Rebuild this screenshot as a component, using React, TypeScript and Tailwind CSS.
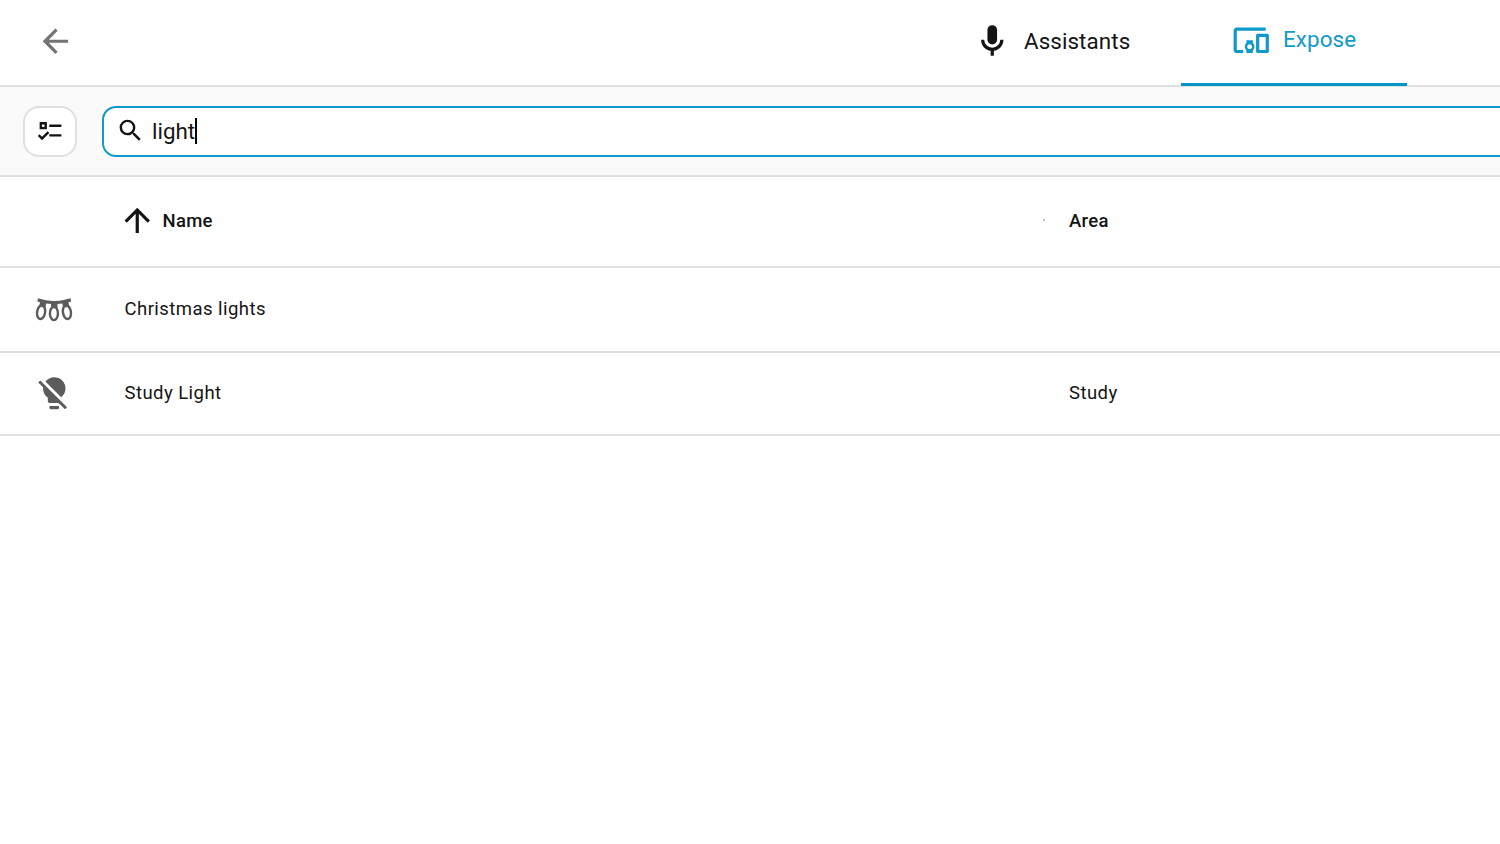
const icons = {
  back: "M20,11V13H8L13.5,18.5L12.08,19.92L4.16,12L12.08,4.08L13.5,5.5L8,11H20Z",
  sort: "M13,20H11V8L5.5,13.5L4.08,12.08L12,4.16L19.92,12.08L18.5,13.5L13,8V20Z",
  microphone:
    "M12,2A3,3 0 0,1 15,5V11A3,3 0 0,1 12,14A3,3 0 0,1 9,11V5A3,3 0 0,1 12,2M19,11C19,14.53 16.39,17.44 13,17.93V21H11V17.93C7.61,17.44 5,14.53 5,11H7A5,5 0 0,0 12,16A5,5 0 0,0 17,11H19Z",
  devices:
    "M3 6H21V4H3C1.9 4 1 4.9 1 6V18C1 19.1 1.9 20 3 20H7V18H3V6M13 12H9V13.78C8.39 14.33 8 15.11 8 16C8 16.89 8.39 17.67 9 18.22V20H13V18.22C13.61 17.67 14 16.88 14 16S13.61 14.33 13 13.78V12M11 17.5C10.17 17.5 9.5 16.83 9.5 16S10.17 14.5 11 14.5 12.5 15.17 12.5 16 11.83 17.5 11 17.5M22 8H16C15.5 8 15 8.5 15 9V19C15 19.5 15.5 20 16 20H22C22.5 20 23 19.5 23 19V9C23 8.5 22.5 8 22 8M21 18H17V10H21V18Z",
  search:
    "M9.5,3A6.5,6.5 0 0,1 16,9.5C16,11.11 15.41,12.59 14.44,13.73L14.71,14H15.5L20.5,19L19,20.5L14,15.5V14.71L13.73,14.44C12.59,15.41 11.11,16 9.5,16A6.5,6.5 0 0,1 3,9.5A6.5,6.5 0 0,1 9.5,3M9.5,5C7,5 5,7 5,9.5C5,12 7,14 9.5,14C12,14 14,12 14,9.5C14,7 12,5 9.5,5Z",
  checks:
    "M3,5H9V11H3V5M5,7V9H7V7H5M11,7H21V9H11V7M11,15H21V17H11V15M5,20L1.5,16.5L2.91,15.09L5,17.17L9.59,12.59L11,14L5,20Z",
  lightOff:
    "M12,2C9.76,2 7.78,3.05 6.5,4.68L16.31,14.5C17.94,13.21 19,11.24 19,9A7,7 0 0,0 12,2M3.28,4L2,5.27L5.04,8.3C5,8.53 5,8.76 5,9C5,11.38 6.19,13.47 8,14.74V17A1,1 0 0,0 9,18H14.73L18.73,22L20,20.72L3.28,4M9,20V21A1,1 0 0,0 10,22H14A1,1 0 0,0 15,21V20H9Z",
};

function Icon({ path, className }: { path: string; className: string }) {
  return (
    <svg viewBox="0 0 24 24" fill="currentColor" className={className}>
      <path d={path} />
    </svg>
  );
}

function StringLights({ className }: { className: string }) {
  return (
    <svg viewBox="0 0 24 24" fill="currentColor" className={className}>
      {/* Cord and sockets */}
      <path d="M1.9,5.2C5,6.2 8.5,6.8 12,6.8S19,6.2 22.1,5.2L22.6,7.1L20.9,7.7L21.3,10.4L17.6,11L17,8.4L14,8.7V11.4H10V8.7L7,8.4L6.4,11L2.7,10.4L3.1,7.7L1.4,7.1Z" />
      {/* Bulbs */}
      <g fill="none" stroke="currentColor" strokeWidth="1.5">
        <ellipse cx="3.8" cy="13.8" rx="2.5" ry="4.3" transform="rotate(9 3.8 13.8)" />
        <ellipse cx="11.8" cy="14.6" rx="2.5" ry="4.2" />
        <ellipse cx="19.9" cy="13.8" rx="2.5" ry="4.3" transform="rotate(-9 19.9 13.8)" />
      </g>
    </svg>
  );
}

export default function App() {
  return (
    <div className="h-[844px] w-full overflow-hidden bg-white font-[Roboto,sans-serif] text-[#141414]">
      {/* Header */}
      <header className="flex h-[87px] border-b-2 border-[#e0e0e0]">
        <button className="ml-[35.5px] mt-[22px] size-[38.5px] text-[#737373]">
          <Icon path={icons.back} className="size-full" />
        </button>
        <nav className="ml-auto mr-[93px] flex h-[86px]">
          <div className="flex items-center pr-[51px] pb-[3px]">
            <Icon path={icons.microphone} className="size-[38.5px]" />
            <span className="ml-[13px] w-[106px] whitespace-nowrap text-[22.4px] tracking-[0.08px]">
              Assistants
            </span>
          </div>
          <div className="flex w-[226px] items-center border-b-3 border-[#0295c7] pl-[51px] pb-[3px] text-[#0f9acb]">
            <Icon path={icons.devices} className="size-[38.5px]" />
            <span className="ml-[12.5px] text-[22.4px] tracking-[0.08px]">Expose</span>
          </div>
        </nav>
      </header>

      {/* Search bar */}
      <div className="flex h-[90px] items-center border-b-2 border-[#e0e0e0] bg-[#fafafa] pl-[22.5px]">
        <button className="flex h-[51px] w-[54.5px] items-center justify-center rounded-2xl border-2 border-[#e0e0e0] bg-white">
          <Icon path={icons.checks} className="mb-[2px] ml-px size-[29px]" />
        </button>
        <div className="ml-[25px] -mr-5 flex h-[51px] flex-1 items-center rounded-[14px] border-2 border-[#0f9acb] bg-white pl-3">
          <Icon path={icons.search} className="mb-[2px] size-[29px]" />
          <span className="ml-[7px] pt-[2px] text-[22.4px]">light</span>
          <span className="h-[26px] w-[2px] bg-black" />
        </div>
      </div>

      {/* Table */}
      <div className="flex h-[91px] items-center border-b-2 border-[#e0e0e0] pl-[118px] pb-[2px] text-[18.5px] font-medium tracking-[0.3px]">
        <Icon path={icons.sort} className="size-[38.5px]" />
        <span className="ml-1.5 pt-[3px]">Name</span>
        <span className="mb-px ml-auto size-0.5 bg-[#bdbdbd]" />
        <span className="ml-6 w-[431px] pt-[3px]">Area</span>
      </div>
      <div className="flex h-[85px] items-center border-b-2 border-[#e0e0e0] pl-[34.5px] text-[18.5px] tracking-[0.45px]">
        <StringLights className="size-[38.5px] text-[#5c5c5c]" />
        <span className="ml-[51.5px]">Christmas lights</span>
      </div>
      <div className="flex h-[83px] items-center border-b-2 border-[#e0e0e0] pl-[34.5px] text-[18.5px] tracking-[0.45px]">
        <Icon path={icons.lightOff} className="mb-px size-[38.5px] text-[#5c5c5c]" />
        <span className="ml-[51.5px] pt-px">Study Light</span>
        <span className="ml-auto w-[431px] pt-px">Study</span>
      </div>
    </div>
  );
}
